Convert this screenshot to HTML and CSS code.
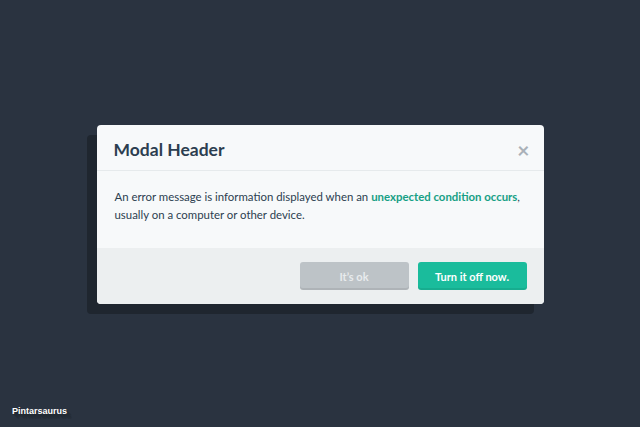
FILE: index.html
```html
<!DOCTYPE html>
<html lang="en">

<head>
    <meta charset="UTF-8">
    <meta name="viewport" content="width=device-width, initial-scale=1.0">
    <title>Modal</title>
    <link rel="stylesheet" href="styles.css">
</head>

<body>
    <main class="stage">
        <div class="modal">
            <div class="modal-header">
                <h2>Modal Header</h2>
                <span class="close">&times;</span>
            </div>
            <div class="modal-body">
                <p>An error message is information displayed when an <a href="#">unexpected condition occurs</a>, usually on a computer or other device.</p>
            </div>
            <div class="modal-footer">
                <button class="btn btn-gray">It’s ok</button>
                <button class="btn btn-green">Turn it off now.</button>
            </div>
        </div>
    </main>
    <div class="brand">Pintarsaurus</div>
</body>

</html>
```

FILE: styles.css
```css
body {
    font-family: 'Lato', 'Liberation Sans', sans-serif;
    margin: 0;
    padding: 0;
    background-color: #2a3340;
}

.stage {
    height: 429px;
    display: flex;
    align-items: center;
    justify-content: center;
}

.modal {
    width: 447px;
    background-color: #f7f9fa;
    border-radius: 4px;
    box-shadow: -10px 10px 0 #1f262f;
    overflow: hidden;
}

.modal-header {
    display: flex;
    align-items: center;
    justify-content: space-between;
    height: 46px;
    padding: 3px 14px 0 17px;
    box-sizing: border-box;
    border-bottom: 1px solid #e6eaec;
}

.modal-header h2 {
    margin: 0;
    font-size: 17.5px;
    font-weight: 700;
    color: #2c3e50;
}

.close {
    font-size: 21px;
    font-weight: 700;
    color: #aab1b8;
    line-height: 1;
}

.modal-body {
    padding: 17px 17px 24px 18px;
}

.modal-body p {
    margin: 0;
    font-size: 11.4px;
    line-height: 18px;
    color: #2c3e50;
}

.modal-body a {
    color: #16a085;
    font-weight: 700;
    text-decoration: none;
}

.modal-footer {
    display: flex;
    justify-content: flex-end;
    gap: 9px;
    padding: 14px 17px;
    background-color: #eceff0;
}

.btn {
    width: 109px;
    height: 28px;
    border: none;
    border-radius: 3px;
    font-family: 'Lato', 'Liberation Sans', sans-serif;
    font-size: 11px;
    font-weight: 700;
    cursor: pointer;
    box-shadow: inset 0 -2px 0 rgba(0, 0, 0, 0.08);
}

.btn-gray {
    background-color: #bdc3c7;
    color: #e8ebed;
}

.btn-green {
    background-color: #1abc9c;
    color: #ffffff;
}

.brand {
    position: absolute;
    left: 12px;
    top: 406px;
    font-family: 'Liberation Sans', sans-serif;
    font-size: 9px;
    font-weight: 700;
    color: #ffffff;
    text-shadow: 1px 1px 0 #222a33, 2px 2px 0 #222a33, 3px 3px 0 #232b35, 4px 4px 0 #242c36, 5px 5px 0 #262e38;
}
```
